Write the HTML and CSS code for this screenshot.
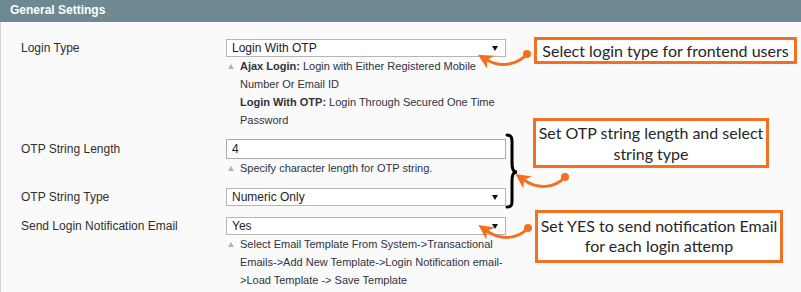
FILE: index.html
```html
<!DOCTYPE html>
<html>
<head>
<meta charset="utf-8">
<title>General Settings</title>
<link rel="stylesheet" href="styles.css">
</head>
<body>
<div class="panel">
  <div class="head">General Settings</div>
  <div class="fields">
    <div class="row first">
      <div class="label">Login Type</div>
      <div class="value">
        <div class="select">Login With OTP<span class="caret"></span></div>
        <div class="hint"><b>Ajax Login:</b> Login with Either Registered Mobile<br>Number Or Email ID<br><b>Login With OTP:</b> Login Through Secured One Time<br>Password</div>
      </div>
    </div>
    <div class="row">
      <div class="label tall">OTP String Length</div>
      <div class="value">
        <div class="input">4</div>
        <div class="hint">Specify character length for OTP string.</div>
      </div>
    </div>
    <div class="row">
      <div class="label">OTP String Type</div>
      <div class="value">
        <div class="select">Numeric Only<span class="caret"></span></div>
      </div>
    </div>
    <div class="row">
      <div class="label">Send Login Notification Email</div>
      <div class="value">
        <div class="select">Yes<span class="caret"></span></div>
        <div class="hint">Select Email Template From System-&gt;Transactional<br>Emails-&gt;Add New Template-&gt;Login Notification email-<br>&gt;Load Template -&gt; Save Template</div>
      </div>
    </div>
  </div>

  <div class="note note1">Select login type for frontend users</div>
  <div class="note note2">Set OTP string length and select<br>string type</div>
  <div class="note note3">Set YES to send notification Email<br>for each login attemp</div>

  <svg class="marks" width="801" height="292" viewBox="0 0 801 292">
    <defs>
      <marker id="ah" viewBox="0 0 10 10" refX="3" refY="5" markerWidth="5" markerHeight="5" orient="auto-start-reverse" markerUnits="strokeWidth">
        <path d="M0,0 L10,5 L0,10 L3,5 z" fill="#f37021"/>
      </marker>
    </defs>
    <path class="brace" d="M507,135 C513,135 512,140 512,150 L512,162 C512,169 513,172 517,172 C513,172 512,175 512,182 L512,196 C512,203 513,207 507,207"/>
    <g class="arrow">
      <path d="M527,54 C517,65 501,68 487,60" marker-end="url(#ah)"/>
      <circle cx="527" cy="54" r="4"/>
      <path d="M565,177 C555,188 538,190 524,180" marker-end="url(#ah)"/>
      <circle cx="565" cy="177" r="4"/>
      <path d="M528,228 C518,239 501,241 487,231" marker-end="url(#ah)"/>
      <circle cx="528" cy="228" r="4"/>
    </g>
  </svg>
</div>
</body>
</html>
```
FILE: styles.css
```css
html, body {
  margin: 0;
  padding: 0;
}
body {
  background: #fafafa;
  font-family: "Liberation Sans", Arial, sans-serif;
  color: #2f2f2f;
}
.panel {
  position: relative;
  width: 801px;
  height: 292px;
  overflow: hidden;
}
.head {
  height: 22px;
  line-height: 21px;
  background: #6f8992;
  color: #fff;
  font-weight: bold;
  font-size: 12px;
  padding-left: 10px;
}
.fields {
  border-left: 1px solid #d6d6d6;
  height: 270px;
  box-sizing: border-box;
  padding: 17px 0 0 20px;
}
.row {
  display: grid;
  grid-template-columns: 205px 280px;
  padding-bottom: 11px;
}
.row.first {
  padding-bottom: 10px;
}
.label {
  font-size: 12px;
  line-height: 18px;
}
.label.tall {
  line-height: 20px;
}
.select, .input {
  position: relative;
  box-sizing: border-box;
  height: 18px;
  border: 1px solid #b6b6b6;
  background: #fff;
  font-size: 12px;
  line-height: 16px;
  padding-left: 5px;
  color: #222;
}
.input {
  height: 20px;
  line-height: 18px;
  border-color: #aaa;
}
.caret {
  position: absolute;
  right: 7px;
  top: 6px;
  width: 0;
  height: 0;
  border-left: 3px solid transparent;
  border-right: 3px solid transparent;
  border-top: 5px solid #111;
}
.hint {
  position: relative;
  font-size: 11px;
  line-height: 18px;
  padding-left: 14px;
  color: #2f3340;
}
.hint::before {
  content: "";
  position: absolute;
  left: 2px;
  top: 7px;
  width: 0;
  height: 0;
  border-left: 3px solid transparent;
  border-right: 3px solid transparent;
  border-bottom: 5px solid #aab6bc;
}
.note {
  position: absolute;
  box-sizing: border-box;
  border: 3px solid #f37021;
  background: #fff;
  font-family: Lato, "Open Sans", sans-serif;
  font-size: 16px;
  color: #262626;
  text-align: center;
}
.note1 {
  left: 534px;
  top: 37px;
  width: 263px;
  height: 27px;
  line-height: 21px;
}
.note2 {
  left: 533px;
  top: 118px;
  width: 236px;
  height: 50px;
  line-height: 21px;
  padding-top: 1px;
}
.note3 {
  left: 535px;
  top: 210px;
  width: 248px;
  height: 53px;
  line-height: 20px;
  padding-top: 3px;
}
.marks {
  position: absolute;
  left: 0;
  top: 0;
  pointer-events: none;
}
.brace {
  fill: none;
  stroke: #000;
  stroke-width: 3;
  stroke-linecap: round;
}
.arrow path {
  fill: none;
  stroke: #f37021;
  stroke-width: 3;
  stroke-linecap: round;
}
.arrow circle {
  fill: #f37021;
}
```
